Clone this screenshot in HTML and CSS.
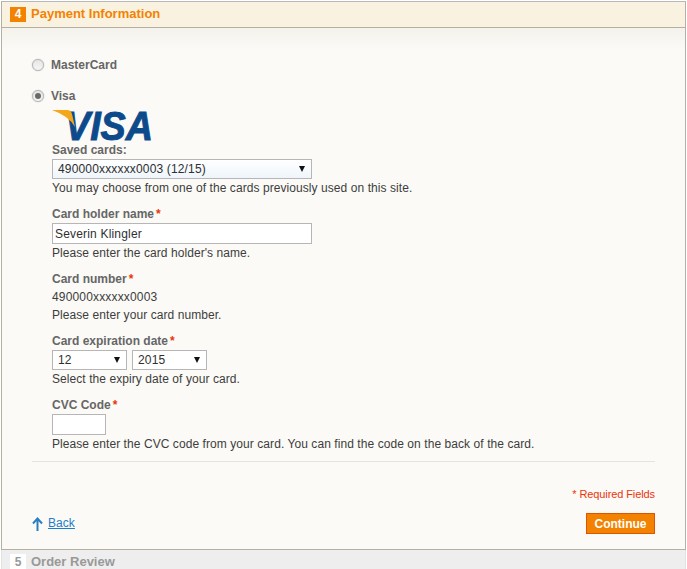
FILE: index.html
```html
<!DOCTYPE html>
<html lang="en">
<head>
<meta charset="utf-8">
<title>Payment Information</title>
<link rel="stylesheet" href="styles.css">
</head>
<body>
<section class="step">
  <header class="step-head">
    <span class="step-num">4</span>
    <h2 class="step-title">Payment Information</h2>
  </header>
  <div class="step-body">
    <div class="method method-first">
      <span class="radio"></span>
      <span class="method-name">MasterCard</span>
    </div>
    <div class="method method-second">
      <span class="radio radio-on"></span>
      <span class="method-name">Visa</span>
    </div>
    <div class="fields">
      <svg class="visa" width="101" height="32" viewBox="0 0 101 32" role="img" aria-label="Visa">
        <text class="visa-text" x="13" y="30.5" textLength="88" lengthAdjust="spacingAndGlyphs">VISA</text>
        <path class="visa-swoosh" d="M0 1 H15 Q19 1 20 5 L23 18 Q17 7 0 1 Z"/>
      </svg>
      <label class="label">Saved cards:</label>
      <div class="select-wrap select-saved">
        <select class="select select-gradient"><option>490000xxxxxx0003 (12/15)</option></select>
      </div>
      <p class="help">You may choose from one of the cards previously used on this site.</p>

      <label class="label label-gap">Card holder name<span class="req">*</span></label>
      <input class="input input-name" type="text" value="Severin Klingler">
      <p class="help">Please enter the card holder's name.</p>

      <label class="label label-gap">Card number<span class="req">*</span></label>
      <p class="value">490000xxxxxx0003</p>
      <p class="help">Please enter your card number.</p>

      <label class="label label-gap">Card expiration date<span class="req">*</span></label>
      <div class="select-row">
        <div class="select-wrap select-small"><select class="select"><option>12</option></select></div>
        <div class="select-wrap select-small"><select class="select"><option>2015</option></select></div>
      </div>
      <p class="help">Select the expiry date of your card.</p>

      <label class="label label-gap">CVC Code<span class="req">*</span></label>
      <input class="input input-cvc" type="text">
      <p class="help">Please enter the CVC code from your card. You can find the code on the back of the card.</p>
    </div>
    <hr class="rule">
    <p class="required">* Required Fields</p>
    <div class="actions">
      <a class="back" href="#">
        <svg class="back-arrow" width="11" height="14" viewBox="0 0 11 14"><path d="M5.5 14 V2 M1 6.5 L5.5 1.5 L10 6.5" fill="none" stroke="#2a7fc4" stroke-width="2"/></svg>
        <span class="back-text">Back</span>
      </a>
      <button class="continue" type="button">Continue</button>
    </div>
  </div>
</section>
<section class="step-next">
  <span class="step-num step-num-off">5</span>
  <h2 class="step-title step-title-off">Order Review</h2>
</section>
</body>
</html>
```
FILE: styles.css
```css
html, body {
  margin: 0;
  padding: 0;
  height: 569px;
  overflow: hidden;
  background: #ffffff;
}
body {
  font-family: "Liberation Sans", Arial, sans-serif;
  font-size: 12px;
  line-height: 18px;
  color: #3d3d3d;
}
.step {
  margin: 1px 1px 0 1px;
  border: 1px solid #b8afa3;
  border-top-color: #b6b8ba;
  border-bottom: 0;
  background: #fbfaf6;
}
.step-head {
  height: 20px;
  display: flex;
  align-items: flex-start;
  gap: 5px;
  padding: 5px 0 0 8px;
  background: #faf2e1;
  border-bottom: 1px solid #b8afa3;
}
.step-num {
  width: 16px;
  height: 15px;
  background: #f38200;
  color: #fff;
  font-weight: bold;
  font-size: 12px;
  line-height: 15px;
  text-align: center;
}
.step-title {
  margin: 0;
  font-size: 13px;
  line-height: 14px;
  font-weight: bold;
  color: #f38200;
}
.step-body {
  height: 522px;
  box-sizing: border-box;
  border-bottom: 1px solid #b8afa3;
  background: linear-gradient(#f4f2ec 0, #fbfaf6 22px);
  padding: 28px 30px 0 30px;
}
.method {
  display: flex;
  align-items: center;
  gap: 7px;
  height: 18px;
  font-weight: bold;
  color: #666666;
}
.method-second { margin-top: 13px; }
.radio {
  width: 12px;
  height: 12px;
  border-radius: 50%;
  box-sizing: border-box;
  border: 1px solid #b5b5b5;
  background: linear-gradient(#e6e6e6, #f6f6f6);
  box-shadow: 0 0 1px #999;
  display: flex;
  align-items: center;
  justify-content: center;
}
.radio-on::after {
  content: "";
  width: 6px;
  height: 6px;
  border-radius: 50%;
  background: #6a6a6a;
}
.fields {
  margin-left: 20px;
  padding-top: 4px;
}
.visa {
  display: block;
  overflow: visible;
}
.visa-swoosh { fill: #f3a81c; }
.visa-text {
  font-family: "Liberation Sans", Arial, sans-serif;
  font-weight: bold;
  font-style: italic;
  font-size: 41px;
  fill: #0d4a8c;
  stroke: #0d4a8c;
  stroke-width: 1;
}
.label {
  display: block;
  font-weight: bold;
  color: #666666;
  line-height: 18px;
}
.label-gap { margin-top: 8px; }
.req {
  color: #eb340a;
  margin-left: 2px;
}
.select-wrap { position: relative; }
.select-wrap::after {
  content: "";
  position: absolute;
  right: 7px;
  top: 7px;
  border-left: 3.5px solid transparent;
  border-right: 3.5px solid transparent;
  border-top: 6px solid #111;
}
.select-saved { width: 260px; }
.select-small { width: 75px; }
.select-row {
  display: flex;
  gap: 5px;
}
.select {
  display: block;
  width: 100%;
  height: 20px;
  margin: 0;
  padding: 0 0 0 5px;
  box-sizing: border-box;
  appearance: none;
  border: 1px solid #b6b6b6;
  border-radius: 0;
  background: #ffffff;
  font-family: "Liberation Sans", Arial, sans-serif;
  font-size: 12px;
  letter-spacing: 0.16px;
  color: #2f2f2f;
}
.select-gradient { background: linear-gradient(#ffffff, #eef5fb); }
.input {
  display: block;
  box-sizing: border-box;
  margin: 0;
  padding: 0 2px;
  border: 1px solid #b6b6b6;
  background: #fff;
  font-family: "Liberation Sans", Arial, sans-serif;
  font-size: 12px;
  letter-spacing: 0.18px;
  color: #2f2f2f;
  border-radius: 0;
}
.input-name { width: 260px; height: 21px; }
.input-cvc { width: 54px; height: 21px; }
.help, .value {
  margin: 0;
  line-height: 18px;
}
.help { letter-spacing: 0.07px; }
.value { letter-spacing: 0.16px; }
.rule {
  margin: 8px 0 0 0;
  border: 0;
  border-top: 1px solid #e6e4de;
}
.required {
  margin: 23px 0 0 0;
  text-align: right;
  font-size: 11px;
  line-height: 18px;
  letter-spacing: -0.1px;
  color: #eb340a;
}
.actions {
  margin-top: 10px;
  display: flex;
  justify-content: space-between;
  align-items: center;
}
.back {
  display: flex;
  align-items: center;
  gap: 5px;
  margin-top: -2px;
  color: #1e7ec8;
}
.back-arrow { display: block; margin-top: 2px; }
.back-text { text-decoration: underline; }
.continue {
  width: 69px;
  height: 21px;
  padding: 0;
  box-sizing: border-box;
  border: 1px solid #de5400;
  background: #f38200;
  color: #fff;
  font-family: "Liberation Sans", Arial, sans-serif;
  font-size: 12px;
  font-weight: bold;
}
.step-next {
  margin: 0 1px;
  height: 15px;
  display: flex;
  align-items: flex-start;
  gap: 5px;
  padding: 4px 0 0 8px;
  border-left: 1px solid #e2e2e2;
  border-right: 1px solid #e2e2e2;
  background: #eeeeee;
}
.step-num-off {
  height: 16px;
  line-height: 16px;
  background: #fff;
  color: #999;
}
.step-title-off {
  line-height: 16px;
  color: #999;
}
```
